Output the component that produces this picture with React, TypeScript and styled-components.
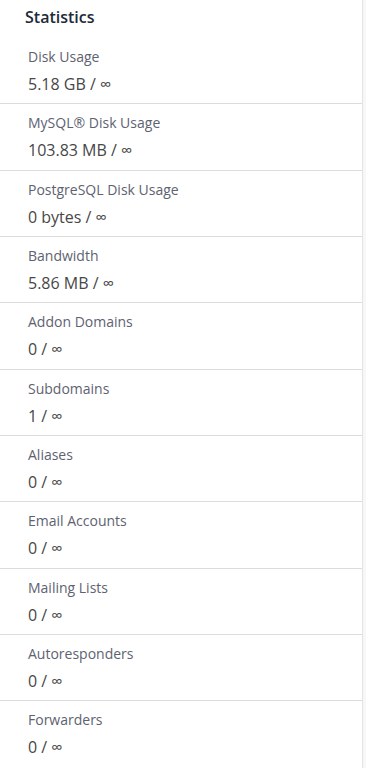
import React from 'react';
import styled, { createGlobalStyle } from 'styled-components';

const GlobalStyle = createGlobalStyle`
  body {
    margin: 0;
    background: #ffffff;
    font-family: "Open Sans", "Liberation Sans", sans-serif;
  }
`;

interface IStat {
  label: string;
  value: string;
}

const stats: IStat[] = [
  { label: 'Disk Usage', value: '5.18 GB / ∞' },
  { label: 'MySQL® Disk Usage', value: '103.83 MB / ∞' },
  { label: 'PostgreSQL Disk Usage', value: '0 bytes / ∞' },
  { label: 'Bandwidth', value: '5.86 MB / ∞' },
  { label: 'Addon Domains', value: '0 / ∞' },
  { label: 'Subdomains', value: '1 / ∞' },
  { label: 'Aliases', value: '0 / ∞' },
  { label: 'Email Accounts', value: '0 / ∞' },
  { label: 'Mailing Lists', value: '0 / ∞' },
  { label: 'Autoresponders', value: '0 / ∞' },
  { label: 'Forwarders', value: '0 / ∞' },
];

const App: React.FC = () => {
  return (
    <>
      <GlobalStyle />
      <SPage>
        <SPanel>
          <SHeader>Statistics</SHeader>
          {stats.map((stat, i) => (
            <SRow key={stat.label} $first={i === 0}>
              <SLabel>{stat.label}</SLabel>
              <SValue>{stat.value}</SValue>
            </SRow>
          ))}
        </SPanel>
      </SPage>
    </>
  );
};

export default App;

const SPage = styled.div`
  display: flex;
  height: 768px;
  overflow: hidden;
  background: #f7f7f7;
`;

const SPanel = styled.section`
  width: 362px;
  background: #ffffff;
  border-right: 1px solid #e4e4e4;
  display: flex;
  flex-direction: column;
`;

const SHeader = styled.h2`
  margin: 0;
  height: 38px;
  padding: 6px 0 0 25px;
  box-sizing: border-box;
  font-size: 16px;
  line-height: 22px;
  font-weight: 600;
  color: #1d2a38;
`;

const SRow = styled.div<{ $first?: boolean }>`
  display: flex;
  flex-direction: column;
  padding: 9px 0 7.33px 28px;
  border-top: ${(p) => (p.$first ? 'none' : '1px solid #dcdcdc')};
`;

const SLabel = styled.div`
  font-size: 14px;
  line-height: 20px;
  color: #5e6270;
`;

const SValue = styled.div`
  margin-top: 5px;
  font-size: 16px;
  line-height: 24px;
  color: #474747;
`;
